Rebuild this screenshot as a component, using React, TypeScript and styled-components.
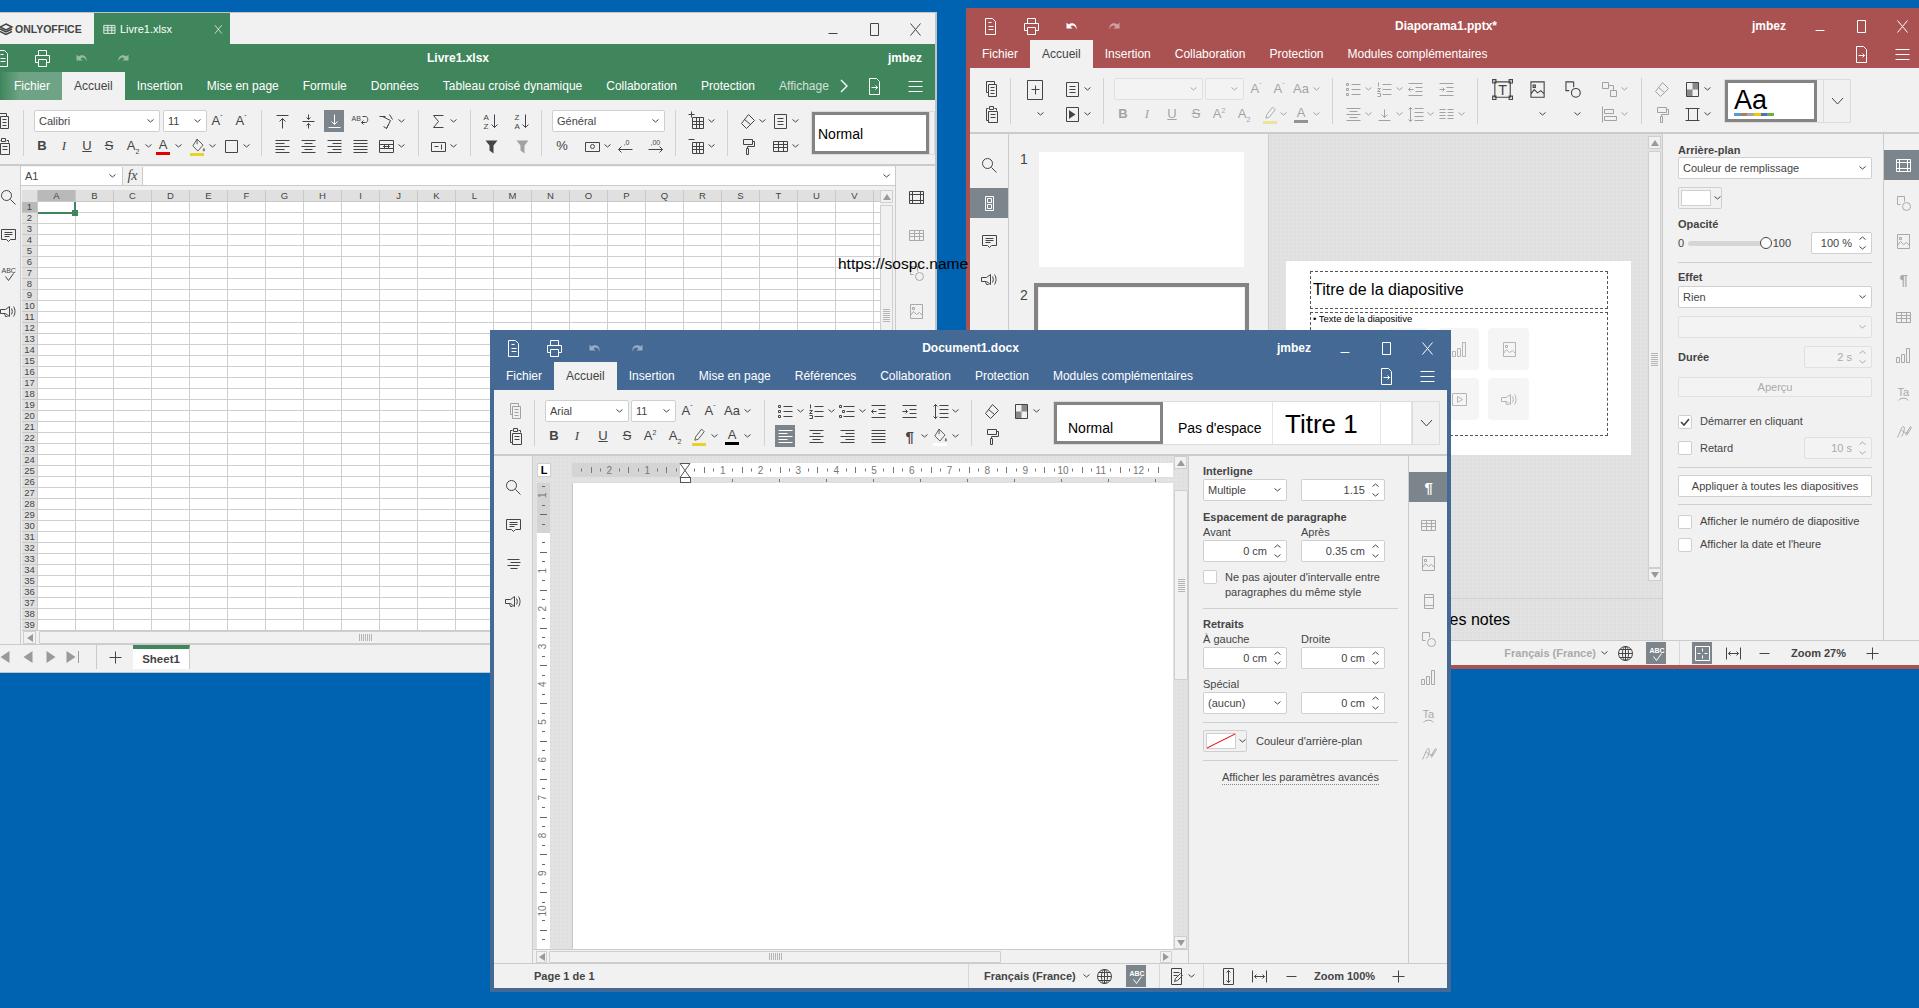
import React from "react";
import styled, { createGlobalStyle } from "styled-components";

const GlobalStyle = createGlobalStyle`
  * { box-sizing: border-box; }
  html, body { margin: 0; padding: 0; overflow: hidden; }
`;

const GREEN = "#40865c";
const RED = "#aa5252";
const BLUE = "#446995";
const PANEL = "#f1f1f1";
const LINE = "#cbcbcb";
const ACTIVE = "#7d858c";

// thin-line icons, drawn on a 20x20 box
const PATHS: Record<string, string> = {
  save: "M5 2h7l3 3v13H5z M8 6h3 M8 10h5 M8 13h5",
  print: "M6 7V2h8v5 M3 7h14v7h-3 M3 7v7h3 M6 11h8v7H6z",
  min: "M5 14h9",
  max: "M6 4h8v12H6z",
  close: "M5 4l10 12 M15 4L5 16",
  folder: "M5 2h7l3 3v13H5z M7 11h6 M11 9l2 2-2 2",
  burger: "M3 5h14 M3 10h14 M3 15h14",
  search: "M12 12l5 5 M13 8a5 5 0 1 1-10 0a5 5 0 1 1 10 0",
  comment: "M3 4h14v10h-5l-2 2-2-2H3z M6 7h8 M6 9h8 M6 11h5",
  nav: "M4 6h12 M7 9h10 M4 12h12 M7 15h7",
  speak: "M2 8h5l4-3v10l-4-3H2z M6 12l1 3h2 M13 7c1 2 1 4 0 6 M15 5c2 3 2 7 0 10",
  slides: "M6 3h8v14H6z M8 5h4v4H8z M8 11h4v4H8z",
  table: "M3 5h14v10H3z M3 8h14 M3 11h14 M8 5v10 M13 5v10",
  image: "M4 3h12v14H4z M4 14l3-4 3 3 3-2 3 3 M6 6h2v2H6z",
  shape: "M11 3H4v8h3 M11 3v5 M17 13a4 4 0 1 1-8 0a4 4 0 1 1 8 0",
  chart: "M3 12h3v5H3z M8 9h3v8H8z M13 3h3v14h-3z",
  video: "M3 4h14v12H3z M8 7l5 3-5 3z",
  page: "M6 3h9v14H6z M6 6h9 M6 14h9",
  sign: "M4 16c3-6 4-11 6-11s0 8-2 10 M8 9c3 1 4 4 7 2 M12 13l5-8 1 1-5 8",
  cell: "M3 4h14v12H3z M3 7h14 M3 13h14 M6 4v12 M14 4v12",
  copy: "M5 2h8v3 M5 2v11h2 M7 5h8v12H7z M9 8h4 M9 11h4 M9 14h4",
  paste: "M5 4h2 M13 4h2v2 M5 4v12h2 M8 2h4v3H8z M7 7h9v11H7z M9 10h5 M9 13h5",
  bullets: "M8 5h9 M8 10h9 M8 15h9 M3 4h2v2H3z M3 9h2v2H3z M3 14h2v2H3z",
  numbers: "M8 5h9 M8 10h9 M8 15h9 M4 3v4 M3 9h3l-3 3h3 M3 14h3v3H3",
  multi: "M6 5h11 M9 10h8 M6 15h11 M2 4h2v2H2z M5 9h2v2H5z M2 14h2v2H2z",
  outdent: "M3 4h14 M10 8h7 M10 12h7 M3 16h14 M8 10H3 M5 8l-2 2 2 2",
  indent: "M3 4h14 M10 8h7 M10 12h7 M3 16h14 M3 10h5 M6 8l2 2-2 2",
  spacing: "M9 4h9 M9 8h9 M9 12h9 M9 16h9 M5 3v14 M3 5l2-2 2 2 M3 15l2 2 2-2",
  alignL: "M3 4h14 M3 7h9 M3 10h14 M3 13h9 M3 16h14",
  alignC: "M3 4h14 M6 7h8 M3 10h14 M6 13h8 M3 16h14",
  alignR: "M3 4h14 M8 7h9 M3 10h14 M8 13h9 M3 16h14",
  justify: "M3 4h14 M3 7h14 M3 10h14 M3 13h14 M3 16h14",
  vTop: "M4 4h12 M10 17V7 M7 10l3-3 3 3",
  vMid: "M4 10h12 M10 3v5 M8 6l2 2 2-2 M10 17v-5 M8 14l2-2 2 2",
  vBot: "M4 16h12 M10 3v10 M7 10l3 3 3-3",
  vAlign: "M4 16h12 M10 5v8 M7 10l3 3 3-3",
  orient: "M3 5h6 M6 5l8 4-4 8 M12 13l-2 4-3-2 M13 3l3 5",
  sum: "M15 4H5l5 6-5 6h10",
  eraser: "M11 3l6 6-8 8-5-5z M7 8l6 5",
  theme: "M4 3h12v14H4z",
  brush: "M6 3h9v5H6z M15 5h2v5h-7v2 M9 12h2v6H9z",
  money: "M3 6h14v9H3z M12 10a2 2 0 1 1-4 0a2 2 0 1 1 4 0",
  insert: "M6 6h11v11H6z M6 10h11 M6 13h11 M10 6v11 M13 6v11 M2 3h6 M5 0v6",
  remove: "M6 6h11v11H6z M6 10h11 M6 13h11 M10 6v11 M13 6v11 M2 3h6",
  merge: "M3 4h14v12H3z M3 8h14 M3 12h14 M7 10h6 M9 8l-2 2 2 2 M11 8l2 2-2 2",
  border: "M4 4h12v12H4z",
  bucket: "M9 2l7 7-6 7-6-6z M9 2v6 M17 13c-1 2-1 3 0 3s1-1 0-3",
  pen: "M12 2l3 3-7 9-4 1 1-4z",
  clearFn: "M3 6h14v9H3z M6 10h4 M13 8v5",
  rowsList: "M4 3h12v14H4z M7 7h6 M7 10h6 M7 13h6",
  play: "M4 3h12v14H4z M7 6v8",
  addSlide: "M2 1h15v19H2z M10 6v9 M6 10h8",
  arrange: "M3 3h6v6H3z M11 11h6v6h-6z M9 6h5v5",
  alignObj: "M3 2v16 M5 5h9v4H5z M5 12h12v4H5z",
  size: "M6 4h9v12H6z M3 4h14 M3 16h14",
  columns: "M3 5h6 M3 8h6 M3 11h6 M3 14h6 M11 5h6 M11 8h6 M11 11h6 M11 14h6",
  globe: "M17 10a7 7 0 1 1-14 0a7 7 0 1 1 14 0 M3 10h14 M10 3v14 M13 10c0 4-1 7-3 7s-3-3-3-7 1-7 3-7 3 3 3 7 M4 6h12 M4 14h12",
  fitPage: "M5 2h10v16H5z M10 4v12 M8 6l2-2 2 2 M8 14l2 2 2-2",
  fitWidth: "M3 4v12 M17 4v12 M5 10h10 M7 8l-2 2 2 2 M13 8l2 2-2 2",
  fitAll: "M3 3h14v14H3z M10 5v3 M10 12v3 M5 10h3 M12 10h3",
  zoomOut: "M5 10h10",
  zoomIn: "M4 10h12 M10 4v12",
  track: "M5 2h10v16H5z M7 6h6 M7 9h4 M8 15l1-3 5-5 2 2-5 5z",
};

const SOLID: Record<string, string> = {
  undo: "M4 6v6h6L8 10c2-2 5-1 6 3 1-5-4-8-8-5z",
  redo: "M16 6v6h-6l2-2c-2-2-5-1-6 3-1-5 4-8 8-5z",
  filter: "M4 4h12l-4 5v8l-4-3V9z",
  themeFill: "M10 3h6v7h-6z M4 10h6v7H4z",
  playFill: "M7 6l6 4-6 4z",
};

const TEXTS: Record<string, React.ReactNode> = {
  sortAZ: (<><text x="2" y="8" fontSize="8">A</text><text x="2" y="17" fontSize="8">Z</text><path d="M13 3v13 M10 13l3 3 3-3" /></>),
  sortZA: (<><text x="2" y="8" fontSize="8">Z</text><text x="2" y="17" fontSize="8">A</text><path d="M13 3v13 M10 13l3 3 3-3" /></>),
  wrap: (<><text x="1" y="9" fontSize="7">AB</text><path d="M12 5h3c3 0 3 6 0 6h-4 M13 9l-2 2 2 2" /></>),
  dec: (<><text x="8" y="8" fontSize="7">,0</text><path d="M17 13H3 M6 10l-3 3 3 3" /></>),
  inc: (<><text x="5" y="8" fontSize="7">,00</text><path d="M3 13h14 M14 10l3 3-3 3" /></>),
  textBox: (<><path d="M3 3h14v14H3z M1 1h3v3H1z M16 1h3v3h-3z M1 16h3v3H1z M16 16h3v3h-3z" /><text x="6" y="15" fontSize="13">T</text></>),
  abc: (<><text x="3" y="9" fontSize="7">ABC</text><path d="M7 13l3 4 5-7" /></>),
  ta: (<><text x="4" y="12" fontSize="11">Ta</text><path d="M5 17c2-3 8-3 10 0" /></>),
  para: (<text x="6" y="15" fontSize="15" fontWeight="bold">¶</text>),
};

const Svg = styled.svg`
  display: block;
  flex: none;
  overflow: visible;
  fill: none;
  stroke: currentColor;
  stroke-width: 1;
  text {
    fill: currentColor;
    stroke: none;
    font-family: "Liberation Sans", Arial, sans-serif;
  }
`;

const Solid = styled.path<{ $soft?: boolean }>`
  fill: currentColor;
  stroke: none;
  opacity: ${(p) => (p.$soft ? 0.6 : 1)};
`;

const Icon: React.FC<{ n: string; s?: number }> = ({ n, s = 20 }) => (
  <Svg width={s} height={s} viewBox="0 0 20 20">
    <g transform="translate(.5 .5)">
      {PATHS[n] && <path d={PATHS[n]} />}
      {SOLID[n] && <Solid d={SOLID[n]} />}
      {n === "theme" && <Solid $soft d={SOLID.themeFill} />}
      {n === "play" && <Solid d={SOLID.playFill} />}
      {TEXTS[n]}
    </g>
  </Svg>
);

const Caret = () => (
  <Svg width="7" height="4" viewBox="0 0 7 4">
    <path d="M.5 .5l3 2.5 3-2.5" />
  </Svg>
);

const Chevron = () => (
  <Svg width="13" height="8" viewBox="0 0 13 8">
    <path d="M1 1l5.500 6 5.500-6" />
  </Svg>
);

const Desktop = styled.main`
  position: relative;
  width: 1919px;
  height: 1008px;
  overflow: hidden;
  background: #0063b1;
  color: #444;
  font: 11px "Liberation Sans", Arial, sans-serif;
`;

const Win = styled.section<{ $x: number; $y: number; $w: number; $h: number; $edge: string }>`
  position: absolute;
  left: ${(p) => p.$x}px;
  top: ${(p) => p.$y}px;
  width: ${(p) => p.$w}px;
  height: ${(p) => p.$h}px;
  display: flex;
  flex-direction: column;
  background: ${PANEL};
  border: solid ${(p) => p.$edge};
  border-width: 0 4px 4px;
`;

const SheetWin = styled(Win)`
  border-width: 1px 2px 1px 0;
`;

const Watermark = styled.div`
  position: absolute;
  left: 838px;
  top: 255px;
  color: #000;
  font-size: 15.5px;
  line-height: 17px;
`;

const TabStrip = styled.header`
  display: flex;
  align-items: center;
  height: 31px;
  flex: none;
`;

const Brand = styled.div`
  display: flex;
  align-items: center;
  gap: 2px;
  width: 113px;
  padding-left: 18px;
  color: #444;
  font-size: 10.5px;
  font-weight: bold;
`;

const DocTab = styled.div`
  display: flex;
  align-items: center;
  width: 136px;
  height: 100%;
  padding: 0 5px 0 7px;
  background: ${GREEN};
  color: #fff;
  gap: 3px;
  span {
    flex: 1;
    font-size: 11px;
  }
`;

const WinButtons = styled.div`
  display: flex;
  margin-left: auto;
`;

const TitleBar = styled.div<{ $c: string; $h?: number; $pt?: number }>`
  display: grid;
  grid-template-columns: 1fr auto 1fr;
  align-items: center;
  flex: none;
  height: ${(p) => p.$h ?? 32}px;
  padding-top: ${(p) => p.$pt ?? 0}px;
  background: ${(p) => p.$c};
  color: #fff;
`;

const TitleLeft = styled.div<{ $ml: number }>`
  display: flex;
  margin-left: ${(p) => p.$ml}px;
`;

const TitleRight = styled.div`
  display: flex;
  align-items: center;
  justify-content: flex-end;
`;

const Title = styled.div`
  font-size: 12px;
  font-weight: bold;
`;

const User = styled.div<{ $mr: number }>`
  font-size: 12px;
  font-weight: bold;
  margin-right: ${(p) => p.$mr}px;
`;

const HeadSlot = styled.div<{ $dim?: boolean; $w?: number }>`
  display: flex;
  align-items: center;
  justify-content: center;
  width: ${(p) => p.$w ?? 41}px;
  height: 28px;
  opacity: ${(p) => (p.$dim ? 0.45 : 1)};
`;

const TabBar = styled.nav<{ $c: string; $pl?: number }>`
  display: flex;
  align-items: stretch;
  flex: none;
  height: 28px;
  padding-left: ${(p) => p.$pl ?? 0}px;
  background: ${(p) => p.$c};
  color: #fff;
`;

const Tab = styled.div<{ $on?: boolean; $hi?: boolean; $fade?: boolean }>`
  display: flex;
  align-items: center;
  flex: none;
  padding: 0 ${(p) => (p.$fade ? 5 : 12)}px 0 12px;
  font-size: 12px;
  white-space: nowrap;
  background: ${(p) => (p.$on ? PANEL : p.$hi ? "linear-gradient(to right, #448a60, #6fa385 30%)" : "none")};
  color: ${(p) => (p.$on ? "#444" : "#fff")};
  opacity: ${(p) => (p.$fade ? 0.75 : 1)};
`;

const TabTools = styled.div`
  display: flex;
  align-items: center;
  margin-left: auto;
`;

const ChevronSlot = styled.div`
  display: flex;
  justify-content: center;
  width: 20px;
`;

const Toolbar = styled.div<{ $pl: number }>`
  display: flex;
  align-items: flex-start;
  flex: none;
  height: 66px;
  padding: 10px 0 0 ${(p) => p.$pl}px;
  background: ${PANEL};
  border-bottom: 2px solid ${LINE};
`;

const ToolCol = styled.div`
  display: flex;
  flex-direction: column;
  gap: 3px;
  flex: none;
`;

const ToolRow = styled.div`
  display: flex;
  height: 22px;
  align-items: center;
`;

const Sep = styled.div<{ $l: number; $r: number }>`
  width: 1px;
  height: 46px;
  flex: none;
  margin: 0 ${(p) => p.$r}px 0 ${(p) => p.$l}px;
  background: #d2d2d2;
`;

const Slot = styled.div<{ $w: number; $dim?: boolean }>`
  display: flex;
  align-items: center;
  justify-content: center;
  flex: none;
  width: ${(p) => p.$w}px;
  height: 22px;
  opacity: ${(p) => (p.$dim ? 0.45 : 1)};
`;

const IconBox = styled.div<{ $on?: boolean }>`
  display: flex;
  flex-direction: column;
  align-items: center;
  justify-content: center;
  flex: none;
  width: 20px;
  height: 22px;
  background: ${(p) => (p.$on ? ACTIVE : "none")};
  color: ${(p) => (p.$on ? "#fff" : "#444")};
`;

const CaretBox = styled.div`
  display: flex;
  width: 9px;
  margin-right: -9px;
  justify-content: flex-end;
`;

const Bar = styled.div<{ $c: string }>`
  width: 14px;
  height: 3px;
  flex: none;
  margin-top: -1px;
  background: ${(p) => p.$c};
`;

const Glyph = styled.span<{ $b?: boolean; $i?: boolean; $u?: boolean; $s?: boolean }>`
  font-family: ${(p) => (p.$i ? '"Liberation Serif", serif' : '"Liberation Sans", Arial, sans-serif')};
  font-size: 13px;
  line-height: 16px;
  font-weight: ${(p) => (p.$b ? "bold" : "normal")};
  font-style: ${(p) => (p.$i ? "italic" : "normal")};
  text-decoration: ${(p) => (p.$u ? "underline" : p.$s ? "line-through" : "none")};
  white-space: nowrap;
  sup,
  sub {
    font-size: 7px;
    line-height: 0;
  }
`;

type ToolProps = {
  w: number;
  n?: string;
  g?: React.ReactNode;
  c?: boolean;
  on?: boolean;
  bar?: string;
  dim?: boolean;
  s?: number;
};

const Tool: React.FC<ToolProps> = ({ w, n, g, c, on, bar, dim, s }) => (
  <Slot $w={w} $dim={dim}>
    {(n || g) && (
      <IconBox $on={on}>
        {n && <Icon n={n} s={s ?? (bar ? 17 : 20)} />}
        {g}
        {bar && <Bar $c={bar} />}
      </IconBox>
    )}
    {c && (
      <CaretBox>
        <Caret />
      </CaretBox>
    )}
  </Slot>
);

const Field = styled.div<{ $w?: number; $off?: boolean; $h?: number }>`
  display: flex;
  align-items: center;
  flex: none;
  width: ${(p) => (p.$w ? `${p.$w}px` : "100%")};
  height: ${(p) => p.$h ?? 22}px;
  padding: 0 5px 0 4px;
  background: ${(p) => (p.$off ? "#f3f3f3" : "#fff")};
  border: 1px solid ${(p) => (p.$off ? "#e0e0e0" : "#cfcfcf")};
  border-radius: 2px;
  color: ${(p) => (p.$off ? "#aaa" : "#444")};
  svg:last-child {
    margin-left: auto;
  }
`;

const FieldText = styled.span<{ $right?: boolean }>`
  flex: 1;
  white-space: nowrap;
  overflow: hidden;
  text-align: ${(p) => (p.$right ? "right" : "left")};
`;

const Arrows = styled.div`
  display: flex;
  flex-direction: column;
  gap: 6px;
  margin-left: 7px;
`;

const UpArrow = styled.div`
  transform: scaleY(-1);
  height: 4px;
`;

const Combo: React.FC<{ w?: number; off?: boolean; text?: string }> = ({ w, off, text }) => (
  <Field $w={w} $off={off}>
    <FieldText>{text}</FieldText>
    <Caret />
  </Field>
);

const Spin: React.FC<{ w?: number; off?: boolean; text: string }> = ({ w, off, text }) => (
  <Field $w={w} $off={off}>
    <FieldText $right>{text}</FieldText>
    <Arrows>
      <UpArrow>
        <Caret />
      </UpArrow>
      <Caret />
    </Arrows>
  </Field>
);

const Gallery = styled.div<{ $ml: number; $w: number; $top: number }>`
  display: flex;
  flex: none;
  width: ${(p) => p.$w}px;
  height: 44px;
  margin: ${(p) => p.$top}px 0 0 ${(p) => p.$ml}px;
  background: #fff;
  border: 1px solid #dcdcdc;
`;

const StyleCell = styled.div<{ $w: number; $on?: boolean; $pl?: number; $pb?: number }>`
  display: flex;
  align-items: flex-end;
  flex: none;
  width: ${(p) => p.$w}px;
  padding: 0 0 ${(p) => p.$pb ?? (p.$on ? 5 : 8)}px ${(p) => p.$pl ?? 11}px;
  overflow: hidden;
  white-space: nowrap;
  color: #000;
  font-size: 14px;
  border: ${(p) => (p.$on ? "3px solid #848484" : "none")};
  border-right: ${(p) => (p.$on ? "3px solid #848484" : "1px solid #e4e4e4")};
`;

const BigTitle = styled.span`
  font-size: 26px;
  line-height: 30px;
  margin-bottom: -3px;
`;

const GalleryArrow = styled.div`
  display: flex;
  align-items: center;
  justify-content: center;
  flex: 1;
  border-left: 1px solid #dcdcdc;
  background: ${PANEL};
`;

const ThemeCell = styled.div`
  display: flex;
  flex-direction: column;
  width: 92px;
  flex: none;
  padding: 3px 6px;
  border: 3px solid #848484;
  color: #000;
  font-size: 27px;
  line-height: 28px;
`;

const ThemeStrip = styled.div`
  display: flex;
  height: 4px;
  width: 40px;
  margin-top: -1px;
`;

const ThemeBit = styled.i<{ $c: string }>`
  flex: 1;
  background: ${(p) => p.$c};
`;

const ThemeGap = styled.div`
  width: 6px;
  background: ${PANEL};
  flex: none;
`;

const Body = styled.div`
  display: flex;
  flex: 1;
  min-height: 0;
`;

const Rail = styled.aside<{ $w?: number; $side?: boolean }>`
  display: flex;
  flex-direction: column;
  gap: 8px;
  flex: none;
  width: ${(p) => p.$w ?? 39}px;
  padding-top: 16px;
  background: ${PANEL};
  border-${(p) => (p.$side ? "left" : "right")}: 1px solid ${LINE};
`;

const RailItem = styled.div<{ $on?: boolean; $off?: boolean; $pl?: number }>`
  display: flex;
  align-items: center;
  justify-content: center;
  height: 30px;
  padding-left: ${(p) => p.$pl ?? 0}px;
  background: ${(p) => (p.$on ? ACTIVE : "none")};
  color: ${(p) => (p.$on ? "#fff" : p.$off ? "#a9a9a9" : "#444")};
`;

const Panel = styled.div<{ $w: number; $pl: number; $pr: number; $pt?: number }>`
  flex: none;
  width: ${(p) => p.$w}px;
  padding: ${(p) => p.$pt ?? 9}px ${(p) => p.$pr}px 0 ${(p) => p.$pl}px;
  border-left: 1px solid ${LINE};
`;

const Head = styled.div<{ $mt?: number }>`
  height: 13px;
  line-height: 13px;
  margin-top: ${(p) => p.$mt ?? 0}px;
  font-weight: bold;
`;

const Sub = styled.div<{ $mt?: number }>`
  height: 13px;
  line-height: 13px;
  margin-top: ${(p) => p.$mt ?? 0}px;
`;

const Pair = styled.div<{ $mt?: number }>`
  display: grid;
  grid-template-columns: 84px 84px;
  column-gap: 14px;
  row-gap: 1px;
  margin-top: ${(p) => p.$mt ?? 0}px;
`;

const Gap = styled.div<{ $h: number }>`
  height: ${(p) => p.$h}px;
`;

const Rule = styled.div<{ $mt: number }>`
  height: 1px;
  margin-top: ${(p) => p.$mt}px;
  background: #cfcfcf;
`;

const CheckRow = styled.div<{ $mt?: number; $top?: boolean }>`
  display: flex;
  align-items: ${(p) => (p.$top ? "flex-start" : "center")};
  gap: 8px;
  margin-top: ${(p) => p.$mt ?? 0}px;
  line-height: 15px;
`;

const Box = styled.div`
  display: flex;
  align-items: center;
  justify-content: center;
  flex: none;
  width: 14px;
  height: 14px;
  background: #fff;
  border: 1px solid #cfcfcf;
  border-radius: 2px;
`;

const Check: React.FC<{ on?: boolean }> = ({ on }) => (
  <Box>
    {on && (
      <Svg width="10" height="10" viewBox="0 0 10 10">
        <path d="M1 5l3 3 5-6" strokeWidth="1.6" />
      </Svg>
    )}
  </Box>
);

const ColorRow = styled.div<{ $mt: number }>`
  display: flex;
  align-items: center;
  gap: 9px;
  margin-top: ${(p) => p.$mt}px;
`;

const ColorBtn = styled.div<{ $w?: number }>`
  display: flex;
  align-items: center;
  gap: 3px;
  flex: none;
  width: ${(p) => p.$w ?? 44}px;
  height: 22px;
  padding: 2px;
  background: ${PANEL};
  border: 1px solid #cfcfcf;
  border-radius: 2px;
`;

const Swatch = styled.div`
  width: 30px;
  height: 16px;
  background: #fff;
  border: 1px solid #cfcfcf;
  flex: none;
`;

const DottedLink = styled.div`
  width: max-content;
  margin: 10px auto 0;
  line-height: 13px;
  border-bottom: 1px dotted #888;
`;

const Button = styled.div<{ $off?: boolean; $mt: number; $h: number }>`
  display: flex;
  align-items: center;
  justify-content: center;
  height: ${(p) => p.$h}px;
  margin-top: ${(p) => p.$mt}px;
  background: ${(p) => (p.$off ? "#f3f3f3" : "#fff")};
  border: 1px solid ${(p) => (p.$off ? "#e0e0e0" : "#cfcfcf")};
  border-radius: 2px;
  color: ${(p) => (p.$off ? "#aaa" : "#444")};
`;

const SliderRow = styled.div`
  display: flex;
  align-items: center;
  margin-top: 1px;
`;

const Track = styled.div`
  display: flex;
  align-items: center;
  justify-content: flex-end;
  width: 78px;
  height: 5px;
  margin: 0 7px 0 4px;
  background: #d5d5d5;
  border-radius: 3px;
`;

const Knob = styled.div`
  width: 12px;
  height: 12px;
  flex: none;
  margin-right: -6px;
  background: #fff;
  border: 1px solid #444;
  border-radius: 50%;
`;

const RowBetween = styled.div<{ $mt: number }>`
  display: flex;
  align-items: center;
  justify-content: space-between;
  margin-top: ${(p) => p.$mt}px;
`;

const Status = styled.footer`
  display: flex;
  align-items: stretch;
  flex: none;
  height: 25px;
  background: ${PANEL};
  border-top: 1px solid ${LINE};
  font-weight: bold;
`;

const StatusLeft = styled.div<{ $pl?: number; $end?: boolean }>`
  display: flex;
  align-items: center;
  flex: 1;
  padding-left: ${(p) => p.$pl ?? 0}px;
  justify-content: ${(p) => (p.$end ? "flex-end" : "flex-start")};
`;

const StatusPart = styled.div<{ $w: number; $pl?: number }>`
  display: flex;
  align-items: center;
  flex: none;
  width: ${(p) => p.$w}px;
  padding-left: ${(p) => p.$pl ?? 0}px;
  border-left: 1px solid #d8d8d8;
`;

const Lang = styled.span<{ $off?: boolean; $w?: number }>`
  flex: none;
  width: ${(p) => (p.$w ? `${p.$w}px` : "auto")};
  color: ${(p) => (p.$off ? "#aaa" : "#444")};
  white-space: nowrap;
`;

const ZoomText = styled.span<{ $w: number }>`
  flex: none;
  width: ${(p) => p.$w}px;
  white-space: nowrap;
`;

const Dotted = styled.div`
  background-color: #e2e2e2;
  background-image: radial-gradient(#dedede 1px, transparent 1px);
  background-size: 4px 4px;
`;

const ScrollBtn = styled.div<{ $w?: number; $h?: number }>`
  display: flex;
  align-items: center;
  justify-content: center;
  flex: none;
  width: ${(p) => p.$w ?? 13}px;
  height: ${(p) => p.$h ?? 13}px;
  background: ${PANEL};
  border: 1px solid #cfcfcf;
`;

const Tri = styled.i<{ $dir: "up" | "down" | "left" | "right"; $big?: boolean }>`
  width: 0;
  height: 0;
  flex: none;
  border-style: solid;
  border-color: transparent;
  ${(p) => (p.$big ? "transform: scale(1.5);" : "")}
  ${(p) =>
    p.$dir === "up"
      ? "border-width: 0 4px 6px; border-bottom-color: #9a9a9a;"
      : p.$dir === "down"
        ? "border-width: 6px 4px 0; border-top-color: #9a9a9a;"
        : p.$dir === "left"
          ? "border-width: 4px 6px 4px 0; border-right-color: #9a9a9a;"
          : "border-width: 4px 0 4px 6px; border-left-color: #9a9a9a;"}
`;

const Thumb = styled.div<{ $w?: number; $h?: number; $mt?: number; $ml?: number }>`
  display: flex;
  align-items: center;
  justify-content: center;
  flex: none;
  width: ${(p) => (p.$w ? `${p.$w}px` : "100%")};
  height: ${(p) => (p.$h ? `${p.$h}px` : "100%")};
  margin: ${(p) => p.$mt ?? 0}px 0 0 ${(p) => p.$ml ?? 0}px;
  background: ${PANEL};
  border: 1px solid #cfcfcf;
  border-radius: 1px;
`;

const Grip = styled.i<{ $wide?: boolean }>`
  display: block;
  ${(p) =>
    p.$wide
      ? "width: 13px; height: 7px; background: repeating-linear-gradient(to right, #b5b5b5 0 1px, transparent 1px 2px);"
      : "width: 7px; height: 13px; background: repeating-linear-gradient(to bottom, #b5b5b5 0 1px, transparent 1px 2px);"}
`;

/* spreadsheet */

const SheetMain = styled.div`
  display: flex;
  flex-direction: column;
  flex: none;
  width: 874px;
`;

const FormulaBar = styled.div`
  display: flex;
  flex: none;
  height: 19px;
  margin-top: 1px;
  background: #fff;
  border-bottom: 1px solid ${LINE};
`;

const NameBox = styled.div`
  display: flex;
  align-items: center;
  justify-content: space-between;
  width: 101px;
  padding: 0 6px 0 4px;
`;

const Fx = styled.div`
  display: flex;
  align-items: center;
  justify-content: center;
  width: 21px;
  background: ${PANEL};
  border: solid ${LINE};
  border-width: 0 1px;
  font: italic 14px "Liberation Serif", serif;
`;

const FormulaInput = styled.div`
  display: flex;
  align-items: center;
  justify-content: flex-end;
  flex: 1;
  padding-right: 5px;
`;

const SheetArea = styled.div`
  display: flex;
  flex: 1;
  min-height: 0;
  margin-top: 4px;
  padding-left: 1px;
`;

const GridWrap = styled.div`
  display: flex;
  flex-direction: column;
  flex: none;
  width: 858px;
`;

const ColHeads = styled.div`
  display: flex;
  flex: none;
  height: 12px;
  overflow: hidden;
`;

const Corner = styled.div`
  flex: none;
  width: 16px;
  background: #e0e0e0;
  border-right: 1px solid #c9c9c9;
`;

const ColHead = styled.div<{ $on?: boolean }>`
  flex: none;
  width: 38px;
  text-align: center;
  line-height: 11px;
  font-size: 9.5px;
  background: ${(p) => (p.$on ? "#b9b9b9" : "#e0e0e0")};
  border-right: 1px solid #c9c9c9;
  border-bottom: 1px solid #c9c9c9;
`;

const GridBody = styled.div`
  display: flex;
  flex: 1;
  min-height: 0;
  overflow: hidden;
`;

const RowHeads = styled.div`
  flex: none;
  width: 16px;
  overflow: hidden;
`;

const RowHead = styled.div<{ $on?: boolean }>`
  height: 11px;
  text-align: center;
  line-height: 10px;
  font-size: 9.5px;
  background: ${(p) => (p.$on ? "#b9b9b9" : "#e0e0e0")};
  border-right: 1px solid #c9c9c9;
  border-bottom: 1px solid #c9c9c9;
`;

const Cells = styled.div`
  position: relative;
  flex: 1;
  background-color: #fff;
  background-image:
    repeating-linear-gradient(to right, transparent 0 37px, #cfcfcf 37px 38px),
    repeating-linear-gradient(to bottom, transparent 0 10px, #cfcfcf 10px 11px);
`;

const Selected = styled.div`
  position: absolute;
  left: 0;
  top: 0;
  width: 38px;
  height: 12px;
  border-right: 2px solid ${GREEN};
  border-bottom: 2px solid ${GREEN};
  &::after {
    content: "";
    position: absolute;
    right: -4px;
    bottom: -4px;
    width: 6px;
    height: 6px;
    background: ${GREEN};
  }
`;

const SheetHScroll = styled.div`
  display: flex;
  flex: none;
  gap: 3px;
  height: 14px;
  padding-left: 1px;
  border-top: 1px solid ${LINE};
`;

const SheetVScroll = styled.div`
  display: flex;
  flex-direction: column;
  flex: none;
  gap: 2px;
  width: 13px;
`;

const SheetBar = styled.div`
  display: flex;
  align-items: stretch;
  flex: none;
  height: 28px;
  border-top: 1px solid ${LINE};
`;

const SheetNav = styled.div`
  display: flex;
  align-items: center;
  flex: none;
  width: 104px;
  margin: 0 0 3px 12px;
  border-right: 1px solid ${LINE};
`;

const SheetNavBtn = styled.div`
  display: flex;
  justify-content: center;
  align-items: center;
  gap: 2px;
  width: 23px;
  height: 14px;
  flex: none;
`;

const NavEdge = styled.i`
  width: 1px;
  height: 12px;
  flex: none;
  margin-left: 2px;
  background: #9a9a9a;
`;

const SheetAdd = styled.div`
  display: flex;
  align-items: center;
  justify-content: center;
  width: 36px;
  flex: none;
  margin-bottom: 3px;
`;

const SheetTab = styled.div`
  display: flex;
  align-items: center;
  justify-content: center;
  width: 57px;
  margin-bottom: 3px;
  background: #fff;
  border-top: 4px solid ${GREEN};
  border-right: 1px solid ${LINE};
  font-weight: bold;
  font-size: 11.5px;
`;

/* document editor */

const DocArea = styled(Dotted)`
  display: grid;
  grid-template-columns: 39px 601px 15px;
  grid-template-rows: 27px 1fr 14px;
  flex: none;
  width: 655px;
`;

const RulerCorner = styled.div`
  display: flex;
  align-items: center;
  justify-content: center;
  width: 14px;
  height: 14px;
  margin: 7px 0 0 4px;
  background: #fff;
  border: 1px solid #cfcfcf;
  color: #000;
  font-weight: bold;
`;

const HRulerCell = styled.div`
  padding-top: 7px;
`;

const VRulerCell = styled.div`
  padding-left: 4px;
  overflow: hidden;
`;

const Page = styled.div`
  background: #fff;
  border-left: 1px solid #c8c8c8;
`;

const DocVScroll = styled.div`
  display: flex;
  flex-direction: column;
  justify-content: space-between;
  padding-left: 1px;
`;

const DocHScroll = styled.div`
  grid-column: 1 / 4;
  display: flex;
  align-items: center;
  padding-left: 3px;
  border-top: 1px solid ${LINE};
  background: ${PANEL};
`;

const RulerSvg = styled.svg`
  display: block;
  text {
    font: 10px "Liberation Sans", Arial, sans-serif;
    fill: #777;
  }
`;

const HRuler = () => {
  const org = 113;
  const marks: React.ReactNode[] = [];
  for (let q = -11; q <= 50; q++) {
    const x = org + (q * 37.8) / 4;
    if (q === 0) continue;
    if (q % 4 === 0) {
      marks.push(<text key={q} x={x} y="11" textAnchor="middle">{Math.abs(q / 4)}</text>);
    } else {
      const long = Math.abs(q % 2) === 0;
      marks.push(<path key={q} d={`M${Math.round(x) + 0.5} ${long ? 4 : 5.5}v${long ? 6 : 3}`} stroke="#777" />);
    }
  }
  return (
    <RulerSvg width="601" height="20">
      <rect x="0" y="0" width="601" height="14" fill="#fff" />
      <rect x="0" y="0" width="108" height="14" fill="#d4d4d4" />
      {marks}
      {[160, 207, 254, 301, 348, 395, 442, 489, 536, 583].map((x) => (
        <path key={x} d={`M${x + 0.5} 16v3`} stroke="#777" />
      ))}
      <path d="M108 .5h10l-5 7 5 7h-10l5-7z" fill="#fff" stroke="#555" />
      <rect x="108.5" y="14.5" width="10" height="5" fill="#fff" stroke="#555" />
    </RulerSvg>
  );
};

const VRuler = () => {
  const org = 50;
  const marks: React.ReactNode[] = [];
  for (let q = -5; q <= 43; q++) {
    const y = org + (q * 37.8) / 4;
    if (q === 0) continue;
    if (q % 4 === 0) {
      marks.push(
        <text key={q} x="6.5" y={y} textAnchor="middle" dominantBaseline="middle" transform={`rotate(-90 6.5 ${y})`}>
          {Math.abs(q / 4)}
        </text>,
      );
    } else {
      const long = Math.abs(q % 2) === 0;
      marks.push(<path key={q} d={`M${long ? 3 : 5} ${Math.round(y) + 0.5}h${long ? 7 : 3}`} stroke="#666" />);
    }
  }
  return (
    <RulerSvg width="13" height="466">
      <rect x="0" y="0" width="13" height="466" fill="#fff" />
      <rect x="0" y="0" width="13" height="50" fill="#d4d4d4" />
      {marks}
    </RulerSvg>
  );
};

/* presentation */

const Thumbs = styled.div`
  flex: none;
  width: 260px;
  padding-top: 18px;
  border-right: 1px solid ${LINE};
`;

const ThumbRow = styled.div`
  display: flex;
  margin-bottom: 21px;
`;

const ThumbNum = styled.div`
  flex: none;
  width: 30px;
  text-align: center;
  font-size: 14px;
  line-height: 14px;
`;

const SlideThumb = styled.div<{ $on?: boolean }>`
  flex: none;
  width: 205px;
  height: 115px;
  background: #fff;
  outline: ${(p) => (p.$on ? "4px solid #848484" : "none")};
  outline-offset: 1px;
`;

const Editor = styled.div`
  display: flex;
  flex-direction: column;
  flex: none;
  width: 393px;
`;

const SlideArea = styled(Dotted)`
  display: flex;
  flex: 1;
  min-height: 0;
  padding-left: 17px;
`;

const SlideColumn = styled.div`
  flex: none;
  width: 361px;
  padding-top: 127px;
`;

const Slide = styled.div`
  width: 345px;
  height: 194px;
  padding: 10px 23px 0 24px;
  background: #fff;
  color: #000;
`;

const TitleHolder = styled.div`
  display: flex;
  align-items: center;
  height: 38px;
  padding-left: 2px;
  border: 1px dashed #555;
  font-size: 16px;
`;

const BodyHolder = styled.div`
  height: 124px;
  margin-top: 3px;
  padding-left: 2px;
  border: 1px dashed #555;
  font-size: 9.5px;
  line-height: 12px;
`;

const TileGrid = styled.div`
  display: grid;
  grid-template-columns: repeat(3, 41px);
  column-gap: 9px;
  row-gap: 8px;
  margin: 3px 0 0 75px;
`;

const Tile = styled.div`
  display: flex;
  align-items: center;
  justify-content: center;
  height: 42px;
  background: #f5f5f5;
  border-radius: 4px;
  color: #b5b5b5;
`;

const SlideVScroll = styled.div`
  display: flex;
  flex-direction: column;
  flex: none;
  width: 13px;
  margin-left: 1px;
  padding-top: 2px;
`;

const Notes = styled(Dotted)`
  display: flex;
  align-items: center;
  flex: none;
  height: 42px;
  padding-left: 24px;
  border-top: 1px solid #cfcfcf;
  color: #000;
  font-size: 16px;
`;

const COLS = "ABCDEFGHIJKLMNOPQRSTUVW".split("");
const ROWS = Array.from({ length: 39 }, (_, i) => i + 1);
const THEME = ["#5b9bd5", "#a5825a", "#a5a5a5", "#ffc000", "#4472c4", "#70ad47"];

const Spreadsheet = () => (
  <SheetWin $x={-19} $y={12} $w={956} $h={661} $edge="#c4c4c4">
    <TabStrip>
      <Brand>
        <Svg width="14" height="14" viewBox="0 0 14 14">
          <path d="M7 2l6 3-6 3-6-3z M1 7l6 3 6-3 M1 9.5l6 3 6-3" strokeWidth="1.4" />
        </Svg>
        ONLYOFFICE
      </Brand>
      <DocTab>
        <Icon n="table" s={16} />
        <span>Livre1.xlsx</span>
        <Icon n="close" s={14} />
      </DocTab>
      <WinButtons>
        <HeadSlot><Icon n="min" /></HeadSlot>
        <HeadSlot><Icon n="max" /></HeadSlot>
        <HeadSlot><Icon n="close" /></HeadSlot>
      </WinButtons>
    </TabStrip>
    <TitleBar $c={GREEN} $h={28}>
      <TitleLeft $ml={1}>
        <HeadSlot $w={40}><Icon n="save" /></HeadSlot>
        <HeadSlot $w={40}><Icon n="print" /></HeadSlot>
        <HeadSlot $w={40} $dim><Icon n="undo" /></HeadSlot>
        <HeadSlot $w={40} $dim><Icon n="redo" /></HeadSlot>
      </TitleLeft>
      <Title>Livre1.xlsx</Title>
      <TitleRight>
        <User $mr={13}>jmbez</User>
      </TitleRight>
    </TitleBar>
    <TabBar $c={GREEN} $pl={21}>
      <Tab $hi>Fichier</Tab>
      <Tab $on>Accueil</Tab>
      <Tab>Insertion</Tab>
      <Tab>Mise en page</Tab>
      <Tab>Formule</Tab>
      <Tab>Données</Tab>
      <Tab>Tableau croisé dynamique</Tab>
      <Tab>Collaboration</Tab>
      <Tab>Protection</Tab>
      <Tab $fade>Affichage</Tab>
      <TabTools>
        <ChevronSlot>
          <Svg width="8" height="14" viewBox="0 0 8 14"><path d="M1 1l6 6-6 6" strokeWidth="1.4" /></Svg>
        </ChevronSlot>
        <HeadSlot><Icon n="folder" /></HeadSlot>
        <HeadSlot><Icon n="burger" /></HeadSlot>
      </TabTools>
    </TabBar>
    <Toolbar $pl={10}>
      <ToolCol>
        <ToolRow><Tool w={24} n="copy" /></ToolRow>
        <ToolRow><Tool w={24} n="paste" /></ToolRow>
      </ToolCol>
      <Sep $l={8} $r={10} />
      <ToolCol>
        <ToolRow>
          <Combo w={126} text="Calibri" />
          <Slot $w={3} />
          <Combo w={44} text="11" />
          <Tool w={20} g={<Glyph>A<sup>ˆ</sup></Glyph>} />
          <Tool w={28} g={<Glyph>A<sup>ˇ</sup></Glyph>} />
        </ToolRow>
        <ToolRow>
          <Tool w={16} g={<Glyph $b>B</Glyph>} />
          <Tool w={28} g={<Glyph $i>I</Glyph>} />
          <Tool w={18} g={<Glyph $u>U</Glyph>} />
          <Tool w={26} g={<Glyph $s>S</Glyph>} />
          <Tool w={22} c g={<Glyph>A<sub>2</sub></Glyph>} />
          <Tool w={38} c g={<><Glyph>A</Glyph><Bar $c="#e00000" /></>} />
          <Tool w={30} c n="bucket" bar="#e5d32c" />
          <Tool w={38} c n="border" />
        </ToolRow>
      </ToolCol>
      <Sep $l={6} $r={7} />
      <ToolCol>
        <ToolRow>
          <Tool w={26} n="vTop" />
          <Tool w={26} n="vMid" />
          <Tool w={26} n="vBot" on />
          <Tool w={26} n="wrap" />
          <Tool w={26} n="orient" c />
        </ToolRow>
        <ToolRow>
          <Tool w={26} n="alignL" />
          <Tool w={26} n="alignC" />
          <Tool w={26} n="alignR" />
          <Tool w={26} n="justify" />
          <Tool w={26} n="merge" c />
        </ToolRow>
      </ToolCol>
      <Sep $l={19} $r={4} />
      <ToolCol>
        <ToolRow><Tool w={30} n="sum" c /></ToolRow>
        <ToolRow><Tool w={30} n="clearFn" c /></ToolRow>
      </ToolCol>
      <Sep $l={17} $r={4} />
      <ToolCol>
        <ToolRow>
          <Tool w={31} n="sortAZ" />
          <Tool w={31} n="sortZA" />
        </ToolRow>
        <ToolRow>
          <Tool w={31} n="filter" />
          <Tool w={31} n="filter" dim />
        </ToolRow>
      </ToolCol>
      <Sep $l={4} $r={10} />
      <ToolCol>
        <ToolRow><Combo w={113} text="Général" /></ToolRow>
        <ToolRow>
          <Tool w={20} g={<Glyph>%</Glyph>} />
          <Tool w={40} n="money" c />
          <Tool w={26} n="dec" />
          <Tool w={34} n="inc" />
        </ToolRow>
      </ToolCol>
      <Sep $l={3} $r={5} />
      <ToolCol>
        <ToolRow><Tool w={30} n="insert" c /></ToolRow>
        <ToolRow><Tool w={30} n="remove" c /></ToolRow>
      </ToolCol>
      <Sep $l={16} $r={2} />
      <ToolCol>
        <ToolRow>
          <Tool w={33} n="eraser" c />
          <Tool w={33} n="rowsList" c />
        </ToolRow>
        <ToolRow>
          <Tool w={33} n="brush" />
          <Tool w={33} n="table" c />
        </ToolRow>
      </ToolCol>
      <Gallery $ml={15} $w={124} $top={1}>
        <StyleCell $w={117} $on $pl={3} $pb={9}>Normal</StyleCell>
        <GalleryArrow />
      </Gallery>
    </Toolbar>
    <Body>
      <Rail $w={40}>
        <RailItem $pl={14}><Icon n="search" /></RailItem>
        <RailItem $pl={14}><Icon n="comment" /></RailItem>
        <RailItem $pl={14}><Icon n="abc" /></RailItem>
        <RailItem $pl={14}><Icon n="speak" /></RailItem>
      </Rail>
      <SheetMain>
        <FormulaBar>
          <NameBox>A1<Caret /></NameBox>
          <Fx>fx</Fx>
          <FormulaInput><Caret /></FormulaInput>
        </FormulaBar>
        <SheetArea>
          <GridWrap>
            <ColHeads>
              <Corner />
              {COLS.map((c) => (
                <ColHead key={c} $on={c === "A"}>{c === "W" ? "" : c}</ColHead>
              ))}
            </ColHeads>
            <GridBody>
              <RowHeads>
                {ROWS.map((r) => (
                  <RowHead key={r} $on={r === 1}>{r}</RowHead>
                ))}
              </RowHeads>
              <Cells>
                <Selected />
              </Cells>
            </GridBody>
            <SheetHScroll>
              <ScrollBtn $w={13}><Tri $dir="left" /></ScrollBtn>
              <Thumb $w={652}><Grip $wide /></Thumb>
            </SheetHScroll>
          </GridWrap>
          <SheetVScroll>
            <ScrollBtn><Tri $dir="up" /></ScrollBtn>
            <Thumb $h={220}><Grip /></Thumb>
          </SheetVScroll>
        </SheetArea>
      </SheetMain>
      <Rail $w={40} $side>
        <RailItem><Icon n="cell" /></RailItem>
        <RailItem $off><Icon n="table" /></RailItem>
        <RailItem $off><Icon n="shape" /></RailItem>
        <RailItem $off><Icon n="image" /></RailItem>
      </Rail>
    </Body>
    <SheetBar>
      <SheetNav>
        <SheetNavBtn><Tri $dir="left" $big /></SheetNavBtn>
        <SheetNavBtn><Tri $dir="left" $big /></SheetNavBtn>
        <SheetNavBtn><Tri $dir="right" $big /></SheetNavBtn>
        <SheetNavBtn><Tri $dir="right" $big /><NavEdge /></SheetNavBtn>
      </SheetNav>
      <SheetAdd><Icon n="zoomIn" /></SheetAdd>
      <SheetTab>Sheet1</SheetTab>
    </SheetBar>
  </SheetWin>
);

const Presentation = () => (
  <Win $x={966} $y={8} $w={960} $h={661} $edge={RED}>
    <TitleBar $c={RED} $pt={4}>
      <TitleLeft $ml={-1}>
        <HeadSlot><Icon n="save" /></HeadSlot>
        <HeadSlot><Icon n="print" /></HeadSlot>
        <HeadSlot><Icon n="undo" /></HeadSlot>
        <HeadSlot $dim><Icon n="redo" /></HeadSlot>
      </TitleLeft>
      <Title>Diaporama1.pptx*</Title>
      <TitleRight>
        <User $mr={13}>jmbez</User>
        <HeadSlot><Icon n="min" /></HeadSlot>
        <HeadSlot><Icon n="max" /></HeadSlot>
        <HeadSlot><Icon n="close" /></HeadSlot>
      </TitleRight>
    </TitleBar>
    <TabBar $c={RED}>
      <Tab>Fichier</Tab>
      <Tab $on>Accueil</Tab>
      <Tab>Insertion</Tab>
      <Tab>Collaboration</Tab>
      <Tab>Protection</Tab>
      <Tab>Modules complémentaires</Tab>
      <TabTools>
        <HeadSlot><Icon n="folder" /></HeadSlot>
        <HeadSlot><Icon n="burger" /></HeadSlot>
      </TabTools>
    </TabBar>
    <Toolbar $pl={9}>
      <ToolCol>
        <ToolRow><Tool w={24} n="copy" /></ToolRow>
        <ToolRow><Tool w={24} n="paste" /></ToolRow>
      </ToolCol>
      <Sep $l={7} $r={5} />
      <ToolCol>
        <ToolRow>
          <Tool w={37} n="addSlide" />
          <Tool w={37} n="rowsList" c />
        </ToolRow>
        <ToolRow>
          <Tool w={37} c />
          <Tool w={37} n="play" c />
        </ToolRow>
      </ToolCol>
      <Sep $l={13} $r={10} />
      <ToolCol>
        <ToolRow>
          <Combo w={89} off />
          <Slot $w={2} />
          <Combo w={39} off />
          <Tool w={24} dim g={<Glyph>A<sup>ˆ</sup></Glyph>} />
          <Tool w={22} dim g={<Glyph>A<sup>ˇ</sup></Glyph>} />
          <Tool w={22} dim c g={<Glyph>Aa</Glyph>} />
        </ToolRow>
        <ToolRow>
          <Tool w={18} dim g={<Glyph $b>B</Glyph>} />
          <Tool w={30} dim g={<Glyph $i>I</Glyph>} />
          <Tool w={20} dim g={<Glyph $u>U</Glyph>} />
          <Tool w={28} dim g={<Glyph $s>S</Glyph>} />
          <Tool w={18} dim g={<Glyph>A<sup>2</sup></Glyph>} />
          <Tool w={32} dim g={<Glyph>A<sub>2</sub></Glyph>} />
          <Tool w={18} dim c n="pen" bar="#e5d32c" />
          <Tool w={46} dim c g={<><Glyph>A</Glyph><Bar $c="#222" /></>} />
        </ToolRow>
      </ToolCol>
      <Sep $l={8} $r={4} />
      <ToolCol>
        <ToolRow>
          <Tool w={31} dim n="bullets" c />
          <Tool w={31} dim n="numbers" c />
          <Tool w={31} dim n="outdent" />
          <Tool w={31} dim n="indent" />
        </ToolRow>
        <ToolRow>
          <Tool w={31} dim n="alignC" c />
          <Tool w={31} dim n="vAlign" c />
          <Tool w={31} dim n="spacing" c />
          <Tool w={31} dim n="columns" c />
        </ToolRow>
      </ToolCol>
      <Sep $l={16} $r={6} />
      <ToolCol>
        <ToolRow>
          <Tool w={35} n="textBox" s={22} />
          <Tool w={35} n="image" s={22} />
          <Tool w={35} n="shape" s={22} />
          <Tool w={39} dim n="arrange" c />
        </ToolRow>
        <ToolRow>
          <Tool w={35} />
          <Tool w={35} c />
          <Tool w={35} c />
          <Tool w={39} dim n="alignObj" c />
        </ToolRow>
      </ToolCol>
      <Sep $l={13} $r={4} />
      <ToolCol>
        <ToolRow>
          <Tool w={30} dim n="eraser" />
          <Tool w={32} n="theme" c />
        </ToolRow>
        <ToolRow>
          <Tool w={30} dim n="brush" />
          <Tool w={32} n="size" c />
        </ToolRow>
      </ToolCol>
      <Gallery $ml={16} $w={127} $top={1}>
        <ThemeCell>
          Aa
          <ThemeStrip>
            {THEME.map((c) => (
              <ThemeBit key={c} $c={c} />
            ))}
          </ThemeStrip>
        </ThemeCell>
        <ThemeGap />
        <GalleryArrow><Chevron /></GalleryArrow>
      </Gallery>
    </Toolbar>
    <Body>
      <Rail>
        <RailItem><Icon n="search" /></RailItem>
        <RailItem $on><Icon n="slides" /></RailItem>
        <RailItem><Icon n="comment" /></RailItem>
        <RailItem><Icon n="speak" /></RailItem>
      </Rail>
      <Thumbs>
        <ThumbRow>
          <ThumbNum>1</ThumbNum>
          <SlideThumb />
        </ThumbRow>
        <ThumbRow>
          <ThumbNum>2</ThumbNum>
          <SlideThumb $on />
        </ThumbRow>
      </Thumbs>
      <Editor>
        <SlideArea>
          <SlideColumn>
            <Slide>
              <TitleHolder>Titre de la diapositive</TitleHolder>
              <BodyHolder>
                • Texte de la diapositive
                <TileGrid>
                  <Tile><Icon n="table" /></Tile>
                  <Tile><Icon n="chart" /></Tile>
                  <Tile><Icon n="image" /></Tile>
                  <Tile><Icon n="table" /></Tile>
                  <Tile><Icon n="video" /></Tile>
                  <Tile><Icon n="speak" /></Tile>
                </TileGrid>
              </BodyHolder>
            </Slide>
          </SlideColumn>
          <SlideVScroll>
            <ScrollBtn><Tri $dir="up" /></ScrollBtn>
            <Thumb $h={417} $mt={2}><Grip /></Thumb>
            <ScrollBtn><Tri $dir="down" /></ScrollBtn>
          </SlideVScroll>
        </SlideArea>
        <Notes>Cliquez pour ajouter des notes</Notes>
      </Editor>
      <Panel $w={221} $pl={15} $pr={11} $pt={10}>
        <Head>Arrière-plan</Head>
        <Combo text="Couleur de remplissage" />
        <ColorRow $mt={8}>
          <ColorBtn><Swatch /><Caret /></ColorBtn>
        </ColorRow>
        <Head $mt={9}>Opacité</Head>
        <SliderRow>
          0
          <Track><Knob /></Track>
          100
          <Slot $w={20} />
          <Spin w={61} text="100 %" />
        </SliderRow>
        <Rule $mt={8} />
        <Head $mt={8}>Effet</Head>
        <Gap $h={2} />
        <Combo text="Rien" />
        <Gap $h={8} />
        <Combo off />
        <RowBetween $mt={8}>
          <b>Durée</b>
          <Spin w={68} off text="2 s" />
        </RowBetween>
        <Button $off $mt={9} $h={20}>Aperçu</Button>
        <CheckRow $mt={17}>
          <Check on />
          Démarrer en cliquant
        </CheckRow>
        <RowBetween $mt={8}>
          <CheckRow>
            <Check />
            Retard
          </CheckRow>
          <Spin w={68} off text="10 s" />
        </RowBetween>
        <Rule $mt={8} />
        <Button $mt={7} $h={22}>Appliquer à toutes les diapositives</Button>
        <Rule $mt={7} />
        <CheckRow $mt={9}>
          <Check />
          Afficher le numéro de diapositive
        </CheckRow>
        <CheckRow $mt={8}>
          <Check />
          Afficher la date et l'heure
        </CheckRow>
      </Panel>
      <Rail $side>
        <RailItem $on><Icon n="cell" /></RailItem>
        <RailItem $off><Icon n="shape" /></RailItem>
        <RailItem $off><Icon n="image" /></RailItem>
        <RailItem $off><Icon n="para" /></RailItem>
        <RailItem $off><Icon n="table" /></RailItem>
        <RailItem $off><Icon n="chart" /></RailItem>
        <RailItem $off><Icon n="ta" /></RailItem>
        <RailItem $off><Icon n="sign" /></RailItem>
      </Rail>
    </Body>
    <Status>
      <StatusLeft $end>
        <Lang $off>Français (France)</Lang>
        <Slot $w={16}><Caret /></Slot>
        <Slot $w={26}><Icon n="globe" /></Slot>
        <Slot $w={8} />
        <IconBox $on><Icon n="abc" /></IconBox>
        <Slot $w={13} />
      </StatusLeft>
      <StatusPart $w={243} $pl={12}>
        <IconBox $on><Icon n="fitAll" /></IconBox>
        <Slot $w={3} />
        <Slot $w={36}><Icon n="fitWidth" /></Slot>
        <Slot $w={26}><Icon n="zoomOut" /></Slot>
        <Slot $w={14} />
        <ZoomText $w={71}>Zoom 27%</ZoomText>
        <Slot $w={20}><Icon n="zoomIn" /></Slot>
      </StatusPart>
    </Status>
  </Win>
);

const DocumentEditor = () => (
  <Win $x={490} $y={330} $w={961} $h={662} $edge={BLUE}>
    <TitleBar $c={BLUE} $pt={4}>
      <TitleLeft $ml={-2}>
        <HeadSlot><Icon n="save" /></HeadSlot>
        <HeadSlot><Icon n="print" /></HeadSlot>
        <HeadSlot $dim><Icon n="undo" /></HeadSlot>
        <HeadSlot $dim><Icon n="redo" /></HeadSlot>
      </TitleLeft>
      <Title>Document1.docx</Title>
      <TitleRight>
        <User $mr={13}>jmbez</User>
        <HeadSlot><Icon n="min" /></HeadSlot>
        <HeadSlot><Icon n="max" /></HeadSlot>
        <HeadSlot><Icon n="close" /></HeadSlot>
      </TitleRight>
    </TitleBar>
    <TabBar $c={BLUE}>
      <Tab>Fichier</Tab>
      <Tab $on>Accueil</Tab>
      <Tab>Insertion</Tab>
      <Tab>Mise en page</Tab>
      <Tab>Références</Tab>
      <Tab>Collaboration</Tab>
      <Tab>Protection</Tab>
      <Tab>Modules complémentaires</Tab>
      <TabTools>
        <HeadSlot><Icon n="folder" /></HeadSlot>
        <HeadSlot><Icon n="burger" /></HeadSlot>
      </TabTools>
    </TabBar>
    <Toolbar $pl={9}>
      <ToolCol>
        <ToolRow><Tool w={24} dim n="copy" /></ToolRow>
        <ToolRow><Tool w={24} n="paste" /></ToolRow>
      </ToolCol>
      <Sep $l={7} $r={10} />
      <ToolCol>
        <ToolRow>
          <Combo w={84} text="Arial" />
          <Slot $w={2} />
          <Combo w={45} text="11" />
          <Tool w={22} g={<Glyph>A<sup>ˆ</sup></Glyph>} />
          <Tool w={24} g={<Glyph>A<sup>ˇ</sup></Glyph>} />
          <Tool w={20} c g={<Glyph>Aa</Glyph>} />
        </ToolRow>
        <ToolRow>
          <Tool w={18} g={<Glyph $b>B</Glyph>} />
          <Tool w={28} g={<Glyph $i>I</Glyph>} />
          <Tool w={24} g={<Glyph $u>U</Glyph>} />
          <Tool w={24} g={<Glyph $s>S</Glyph>} />
          <Tool w={22} g={<Glyph>A<sup>2</sup></Glyph>} />
          <Tool w={28} g={<Glyph>A<sub>2</sub></Glyph>} />
          <Tool w={20} c n="pen" bar="#e5d32c" />
          <Tool w={46} c g={<><Glyph>A</Glyph><Bar $c="#000" /></>} />
        </ToolRow>
      </ToolCol>
      <Sep $l={9} $r={4} />
      <ToolCol>
        <ToolRow>
          <Tool w={31} n="bullets" c />
          <Tool w={31} n="numbers" c />
          <Tool w={31} n="multi" c />
          <Tool w={31} n="outdent" />
          <Tool w={31} n="indent" />
          <Tool w={31} n="spacing" c />
        </ToolRow>
        <ToolRow>
          <Tool w={31} n="alignL" on />
          <Tool w={31} n="alignC" />
          <Tool w={31} n="alignR" />
          <Tool w={31} n="justify" />
          <Tool w={31} c n="para" />
          <Tool w={31} c n="bucket" bar="#fff" />
        </ToolRow>
      </ToolCol>
      <Sep $l={16} $r={4} />
      <ToolCol>
        <ToolRow>
          <Tool w={30} n="eraser" />
          <Tool w={30} n="theme" c />
        </ToolRow>
        <ToolRow>
          <Tool w={30} n="brush" />
        </ToolRow>
      </ToolCol>
      <Gallery $ml={17} $w={387} $top={1}>
        <StyleCell $w={109} $on>Normal</StyleCell>
        <StyleCell $w={110} $pl={15}>Pas d'espace</StyleCell>
        <StyleCell $w={108} $pl={12}><BigTitle>Titre 1</BigTitle></StyleCell>
        <StyleCell $w={31} />
        <GalleryArrow><Chevron /></GalleryArrow>
      </Gallery>
    </Toolbar>
    <Body>
      <Rail>
        <RailItem><Icon n="search" /></RailItem>
        <RailItem><Icon n="comment" /></RailItem>
        <RailItem><Icon n="nav" /></RailItem>
        <RailItem><Icon n="speak" /></RailItem>
      </Rail>
      <DocArea>
        <RulerCorner>L</RulerCorner>
        <HRulerCell><HRuler /></HRulerCell>
        <DocVScroll>
          <ScrollBtn><Tri $dir="up" /></ScrollBtn>
        </DocVScroll>
        <VRulerCell><VRuler /></VRulerCell>
        <Page />
        <DocVScroll>
          <Thumb $h={190} $mt={7}><Grip /></Thumb>
          <ScrollBtn><Tri $dir="down" /></ScrollBtn>
        </DocVScroll>
        <DocHScroll>
          <ScrollBtn $w={11} $h={12}><Tri $dir="left" /></ScrollBtn>
          <Thumb $w={452} $h={12} $ml={2}><Grip $wide /></Thumb>
          <Thumb $w={12} $h={12} $ml={159}><Tri $dir="right" /></Thumb>
        </DocHScroll>
      </DocArea>
      <Panel $w={220} $pl={14} $pr={10}>
        <Head>Interligne</Head>
        <Pair $mt={1}>
          <Combo text="Multiple" />
          <Spin text="1.15" />
        </Pair>
        <Head $mt={10}>Espacement de paragraphe</Head>
        <Pair $mt={2}>
          <Sub>Avant</Sub>
          <Sub>Après</Sub>
          <Spin text="0 cm" />
          <Spin text="0.35 cm" />
        </Pair>
        <CheckRow $mt={8} $top>
          <Check />
          <div>Ne pas ajouter d'intervalle entre<br />paragraphes du même style</div>
        </CheckRow>
        <Rule $mt={8} />
        <Head $mt={9}>Retraits</Head>
        <Pair $mt={2}>
          <Sub>À gauche</Sub>
          <Sub>Droite</Sub>
          <Spin text="0 cm" />
          <Spin text="0 cm" />
        </Pair>
        <Sub $mt={9}>Spécial</Sub>
        <Pair $mt={1}>
          <Combo text="(aucun)" />
          <Spin text="0 cm" />
        </Pair>
        <Rule $mt={8} />
        <ColorRow $mt={7}>
          <ColorBtn>
            <Swatch>
              <Svg width="28" height="14" viewBox="0 0 28 14">
                <path d="M0 14L28 0" stroke="#e00000" />
              </Svg>
            </Swatch>
            <Caret />
          </ColorBtn>
          Couleur d'arrière-plan
        </ColorRow>
        <Rule $mt={8} />
        <DottedLink>Afficher les paramètres avancés</DottedLink>
      </Panel>
      <Rail $side>
        <RailItem $on><Icon n="para" /></RailItem>
        <RailItem $off><Icon n="table" /></RailItem>
        <RailItem $off><Icon n="image" /></RailItem>
        <RailItem $off><Icon n="page" /></RailItem>
        <RailItem $off><Icon n="shape" /></RailItem>
        <RailItem $off><Icon n="chart" /></RailItem>
        <RailItem $off><Icon n="ta" /></RailItem>
        <RailItem $off><Icon n="sign" /></RailItem>
      </Rail>
    </Body>
    <Status>
      <StatusLeft $pl={40}>Page 1 de 1</StatusLeft>
      <StatusPart $w={191} $pl={15}>
        <Lang $w={96}>Français (France)</Lang>
        <Slot $w={12}><Caret /></Slot>
        <Slot $w={24}><Icon n="globe" /></Slot>
        <Slot $w={10} />
        <IconBox $on><Icon n="abc" /></IconBox>
      </StatusPart>
      <StatusPart $w={44} $pl={6}>
        <Icon n="track" />
        <Slot $w={10}><Caret /></Slot>
      </StatusPart>
      <StatusPart $w={244} $pl={14}>
        <Slot $w={20}><Icon n="fitPage" /></Slot>
        <Slot $w={11} />
        <Slot $w={20}><Icon n="fitWidth" /></Slot>
        <Slot $w={12} />
        <Slot $w={20}><Icon n="zoomOut" /></Slot>
        <Slot $w={13} />
        <ZoomText $w={74}>Zoom 100%</ZoomText>
        <Slot $w={20}><Icon n="zoomIn" /></Slot>
      </StatusPart>
    </Status>
  </Win>
);

export default function App() {
  return (
    <Desktop>
      <GlobalStyle />
      <Spreadsheet />
      <Presentation />
      <Watermark>https://sospc.name</Watermark>
      <DocumentEditor />
    </Desktop>
  );
}
